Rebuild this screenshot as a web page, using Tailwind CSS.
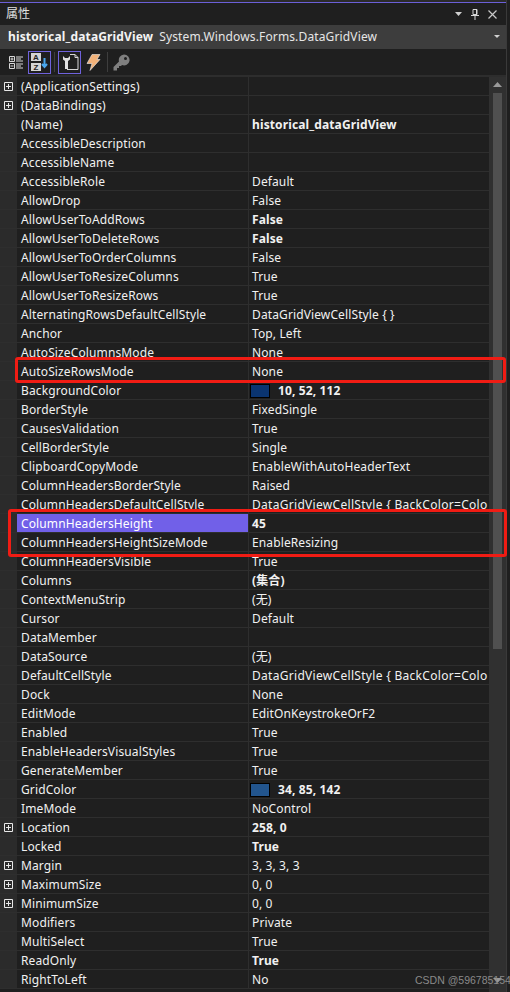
<!DOCTYPE html>
<html lang="en">
<head>
  <meta charset="UTF-8" />
  <title>属性</title>
  <script src="https://cdn.jsdelivr.net/npm/@tailwindcss/browser@4"></script>
</head>
<body class="bg-[#1f1f1f]">
  <div class="relative w-[510px] h-[992px] overflow-hidden bg-[#1f1f1f] text-[12px] text-[#f1f1f1] font-['Noto_Sans','Noto_Sans_CJK_SC',sans-serif]">
    <div id="panel" class="w-[507px] h-[992px] border-r border-[#3a3a3a]">
      <div class="h-[2px] bg-[#2b2b2b]"></div>
      <div class="h-[1px] bg-[#6b5fd8]"></div>

      <!-- title -->
      <div class="h-[22px] flex items-center pl-[6px] pr-[9px]">
        <span class="text-[12px] text-[#e0e0e0]">属性</span>
        <div class="flex-1 ml-[8px] h-[5px] bg-[radial-gradient(#5a5a5a_0.6px,transparent_0.7px)] bg-[length:2px_2px]"></div>
        <svg width="7" height="4" viewBox="0 0 7 4" class="ml-[7px]"><path d="M0 0h7L3.500 4z" fill="#d0d0d0"/></svg>
        <svg width="8" height="11" viewBox="0 0 8 11" class="ml-[9px]"><path d="M2 .500h4v5H2zM0 6.500h8M4 7v4M5.500 1v5" fill="none" stroke="#d8d8d8"/></svg>
        <svg width="9" height="9" viewBox="0 0 9 9" class="ml-[9px]"><path d="M.5.500l8 8M8.500.500l-8 8" stroke="#c8c8c8" stroke-width="1.200"/></svg>
      </div>

      <!-- object selector -->
      <div class="h-[24px] flex items-center pl-[8px] pr-[6px] bg-[#3d3d3d] tracking-[0.14px]">
        <span class="font-bold text-[#f4f4f4]">historical_dataGridView</span>
        <span class="ml-[6px] text-[#e6e6e6]">System.Windows.Forms.DataGridView</span>
        <svg width="6" height="4" viewBox="0 0 6 4" class="ml-auto"><path d="M0 0h6L3 3z" fill="#d0d0d0"/></svg>
      </div>

      <!-- toolbar -->
      <div class="h-[26px] flex items-center">
        <span class="w-[28px] h-[22px] pl-[4px] flex items-center justify-center">
          <svg width="15" height="15" viewBox="0 0 15 15"><path d="M.5 1.500h5v5h-5zM.5 8.500h5v5h-5z" fill="none" stroke="#d8d8d8"/><path d="M1.500 4h3M3 2.500v3M1.500 11h3M7 2h7M7 4h5M7 6h7M7 9h7M7 11h5M7 13h7" stroke="#d8d8d8"/></svg>
        </span>
        <span class="w-[23px] h-[23px] flex items-center justify-center border border-[#6f62dc]">
          <svg width="17" height="18" viewBox="0 0 17 18">
            <rect x="0" y="0" width="10" height="8" fill="#d4d4d4"/>
            <rect x="0" y="10" width="10" height="8" fill="#d4d4d4"/>
            <text x="5" y="7" text-anchor="middle" font-size="8" font-weight="700" font-family="Liberation Sans" fill="#1f1f1f">A</text>
            <text x="5" y="17" text-anchor="middle" font-size="8" font-weight="700" font-family="Liberation Sans" fill="#1f1f1f">Z</text>
            <path d="M13.500 5v9M11 11l2.500 3 2.500-3" fill="none" stroke="#4aa8ec" stroke-width="2"/>
          </svg>
        </span>
        <span class="w-[1px] h-[20px] mx-[3px] bg-[#3e3e3e]"></span>
        <span class="w-[23px] h-[23px] flex items-center justify-center border border-[#6f62dc]">
          <svg width="18" height="18" viewBox="0 0 18 18">
            <path d="M9 1.500h5l3 3v12H6" fill="none" stroke="#d8d8d8"/>
            <path d="M14 1.500v3h3" fill="none" stroke="#d8d8d8"/>
            <path d="M2 3v3.500L4 8v8h3V8l2-1.500V3L7 5H4z" fill="#e0e0e0"/>
          </svg>
        </span>
        <span class="w-[23px] h-[22px] ml-[1px] flex items-center justify-center">
          <svg width="15" height="17" viewBox="0 0 15 17"><path d="M6 .500h8l-3 5h3L4 16.500l2-7H1z" fill="#f2b27a" stroke="#eeeeee" stroke-width="0.600"/></svg>
        </span>
        <span class="w-[1px] h-[20px] ml-[2px] mr-[5px] bg-[#3e3e3e]"></span>
        <span class="w-[17px] h-[22px] flex items-center justify-center">
          <svg width="17" height="17" viewBox="0 0 17 17"><path fill-rule="evenodd" d="M11 .500a5.500 5.500 0 1 1-2 10.600L8 12H6v2H4v2.500H.5v-3.500L6 7.500A5.500 5.500 0 0 1 11 .500zM12.500 3a1.500 1.500 0 1 0 0 3 1.500 1.500 0 0 0 0-3z" fill="#7f7f7f"/></svg>
        </span>
      </div>

      <div class="h-[2px] bg-[#2d2d2d]"></div>

      <!-- grid -->
      <div class="flex">
        <div id="rows" class="w-[489px]"></div>
        <div class="w-[17px] h-[915px] bg-[#303030] flex flex-col items-center">
          <svg width="9" height="5" viewBox="0 0 9 5" class="mt-[5px]"><path d="M0 5h9L4.500 0z" fill="#9a9a9a"/></svg>
          <div class="mt-[6px] w-[9px] h-[556px] bg-[#505050]"></div>
          <svg width="9" height="5" viewBox="0 0 9 5" class="mt-auto mb-[9px]"><path d="M0 0h9L4.500 5z" fill="#9a9a9a"/></svg>
        </div>
      </div>
    </div>

    <!-- red annotation boxes -->
    <div class="absolute left-[15px] top-[357px] w-[491px] h-[26px] border-[3px] border-[#f01c14] rounded-[3px]"></div>
    <div class="absolute left-[8px] top-[509px] w-[499px] h-[48px] border-[3px] border-[#f01c14] rounded-[3px]"></div>

    <div class="absolute left-[415px] top-[973px] whitespace-nowrap text-[10.500px] text-[#8a8a8a] font-['Liberation_Sans',sans-serif]">CSDN @596785154</div>
  </div>

  <script>
    // name, value, flags: p = plus box, b = bold value, w = wider value text, then swatch colour
    const props = [
      ['(ApplicationSettings)', '', 'p'],
      ['(DataBindings)', '', 'p'],
      ['(Name)', 'historical_dataGridView', 'b'],
      ['AccessibleDescription', ''],
      ['AccessibleName', ''],
      ['AccessibleRole', 'Default'],
      ['AllowDrop', 'False'],
      ['AllowUserToAddRows', 'False', 'b'],
      ['AllowUserToDeleteRows', 'False', 'b'],
      ['AllowUserToOrderColumns', 'False'],
      ['AllowUserToResizeColumns', 'True'],
      ['AllowUserToResizeRows', 'True'],
      ['AlternatingRowsDefaultCellStyle', 'DataGridViewCellStyle { }'],
      ['Anchor', 'Top, Left'],
      ['AutoSizeColumnsMode', 'None'],
      ['AutoSizeRowsMode', 'None'],
      ['BackgroundColor', '10, 52, 112', 'b', '#0a3470'],
      ['BorderStyle', 'FixedSingle'],
      ['CausesValidation', 'True'],
      ['CellBorderStyle', 'Single'],
      ['ClipboardCopyMode', 'EnableWithAutoHeaderText'],
      ['ColumnHeadersBorderStyle', 'Raised'],
      ['ColumnHeadersDefaultCellStyle', 'DataGridViewCellStyle { BackColor=Colo', 'w'],
      ['ColumnHeadersHeight', '45', 'b'],
      ['ColumnHeadersHeightSizeMode', 'EnableResizing'],
      ['ColumnHeadersVisible', 'True'],
      ['Columns', '(集合)', 'b'],
      ['ContextMenuStrip', '(无)'],
      ['Cursor', 'Default'],
      ['DataMember', ''],
      ['DataSource', '(无)'],
      ['DefaultCellStyle', 'DataGridViewCellStyle { BackColor=Colo', 'w'],
      ['Dock', 'None'],
      ['EditMode', 'EditOnKeystrokeOrF2'],
      ['Enabled', 'True'],
      ['EnableHeadersVisualStyles', 'True'],
      ['GenerateMember', 'True'],
      ['GridColor', '34, 85, 142', 'b', '#22558e'],
      ['ImeMode', 'NoControl'],
      ['Location', '258, 0', 'pb'],
      ['Locked', 'True', 'b'],
      ['Margin', '3, 3, 3, 3', 'p'],
      ['MaximumSize', '0, 0', 'p'],
      ['MinimumSize', '0, 0', 'p'],
      ['Modifiers', 'Private'],
      ['MultiSelect', 'True'],
      ['ReadOnly', 'True', 'b'],
      ['RightToLeft', 'No']
    ];

    const plusBox = `<svg width="9" height="9" viewBox="0 0 9 9"><path d="M.5.500h8v8h-8zM2 4.500h5M4.500 2v5" fill="none" stroke="#e8e8e8"/></svg>`;

    document.getElementById('rows').innerHTML = props.map(([name, value, flags = '', swatch]) => {
      const selected = name === 'ColumnHeadersHeight';
      return `
        <div class="flex h-[19px] border-b border-[#2e2e2e] tracking-[0.12px]">
          <div class="w-[17px] shrink-0 flex items-center justify-center bg-[#2b2b2b]">${flags.includes('p') ? plusBox : ''}</div>
          <div class="w-[231px] shrink-0 pl-[4px] leading-[20px] whitespace-nowrap overflow-hidden ${selected ? 'bg-[#7160e8] text-white' : ''}">${name}</div>
          <div class="w-[241px] shrink-0 border-l border-[#2e2e2e] pl-[3px] pt-[1px] leading-[18px] whitespace-nowrap overflow-hidden flex items-center ${flags.includes('b') ? 'font-bold' : ''} ${flags.includes('w') ? 'tracking-[0.3px]' : ''}">
            ${swatch ? `<span class="w-[20px] h-[14px] -ml-[2px] mr-[8px] border border-black" style="background:${swatch}"></span>` : ''}${value}
          </div>
        </div>`;
    }).join('');
  </script>
</body>
</html>
